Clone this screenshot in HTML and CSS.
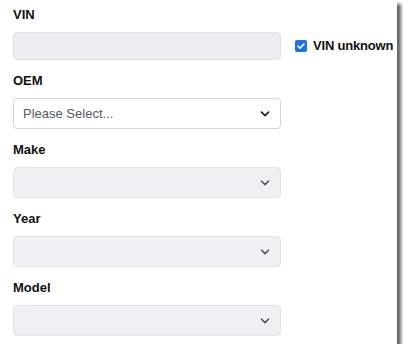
FILE: index.html
```html
<!DOCTYPE html>
<html>
<head>
<meta charset="utf-8">
<link rel="stylesheet" href="styles.css">
</head>
<body>
<div class="card">
  <div class="group">
    <div class="label">VIN</div>
    <div class="vin-row">
      <div class="input disabled vin"></div>
      <label class="check">
        <span class="box"><svg viewBox="0 0 12 12" width="12" height="12"><path d="M3 6.2 L5.1 8.2 L9 4" fill="none" stroke="#fff" stroke-width="1.6" stroke-linecap="round" stroke-linejoin="round"/></svg></span>
        <span class="check-text">VIN unknown</span>
      </label>
    </div>
  </div>
  <div class="group">
    <div class="label">OEM</div>
    <div class="select">
      <span class="placeholder">Please Select...</span>
      <svg class="chev" viewBox="0 0 10 6" width="10" height="6"><path d="M1.5 1.2 L5 4.6 L8.5 1.2" fill="none" stroke="#222" stroke-width="1.7" stroke-linecap="round" stroke-linejoin="round"/></svg>
    </div>
  </div>
  <div class="group">
    <div class="label">Make</div>
    <div class="select disabled">
      <span class="placeholder"></span>
      <svg class="chev" viewBox="0 0 10 6" width="10" height="6"><path d="M1.5 1.2 L5 4.6 L8.5 1.2" fill="none" stroke="#555" stroke-width="1.6" stroke-linecap="round" stroke-linejoin="round"/></svg>
    </div>
  </div>
  <div class="group">
    <div class="label">Year</div>
    <div class="select disabled">
      <span class="placeholder"></span>
      <svg class="chev" viewBox="0 0 10 6" width="10" height="6"><path d="M1.5 1.2 L5 4.6 L8.5 1.2" fill="none" stroke="#555" stroke-width="1.6" stroke-linecap="round" stroke-linejoin="round"/></svg>
    </div>
  </div>
  <div class="group last">
    <div class="label">Model</div>
    <div class="select disabled">
      <span class="placeholder"></span>
      <svg class="chev" viewBox="0 0 10 6" width="10" height="6"><path d="M1.5 1.2 L5 4.6 L8.5 1.2" fill="none" stroke="#555" stroke-width="1.6" stroke-linecap="round" stroke-linejoin="round"/></svg>
    </div>
  </div>
</div>
</body>
</html>
```
FILE: styles.css
```css
html, body {
  margin: 0;
  padding: 0;
  background: #ffffff;
}
body {
  font-family: "Liberation Sans", Arial, sans-serif;
  color: #212529;
}
.card {
  width: 397px;
  height: 344px;
  box-sizing: border-box;
  padding: 7px 13px 0 13px;
  background: #ffffff;
  box-shadow: 4px 4px 3px rgba(0, 0, 0, 0.6);
}
.group {
  margin-bottom: 13px;
}
.label {
  font-size: 13px;
  font-weight: bold;
  line-height: 16px;
  margin-bottom: 9px;
  color: #111;
}
.vin-row {
  display: flex;
  align-items: center;
  gap: 14px;
}
.input {
  flex: 0 0 268px;
  width: 268px;
  height: 28px;
  box-sizing: border-box;
  border: 1px solid #dde1e5;
  border-radius: 4px;
  background: #eceef1;
}
.check {
  display: flex;
  align-items: center;
  gap: 6px;
  white-space: nowrap;
}
.box {
  flex: 0 0 12px;
  width: 12px;
  height: 12px;
  border-radius: 2px;
  background: #1a73e8;
  display: flex;
}
.check-text {
  font-size: 13px;
  font-weight: bold;
  line-height: 16px;
  letter-spacing: -0.2px;
  color: #111;
}
.select {
  width: 268px;
  height: 31px;
  box-sizing: border-box;
  border: 1px solid #d0d5da;
  border-radius: 4px;
  background: #ffffff;
  display: flex;
  align-items: center;
  justify-content: space-between;
  padding: 0 10px 0 9px;
}
.select.disabled {
  background: #eef0f2;
  border-color: #e2e5e8;
}
.placeholder {
  font-size: 13px;
  color: #555b61;
}
.chev {
  display: block;
  margin-top: 1px;
}
```
